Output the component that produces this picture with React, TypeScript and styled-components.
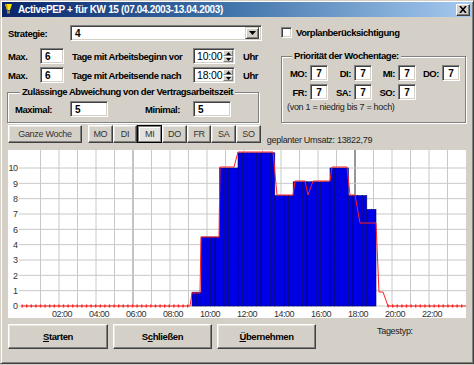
import React from "react";
import styled, { createGlobalStyle } from "styled-components";

const GlobalStyle = createGlobalStyle`
  html, body { margin: 0; padding: 0; background: #d4d0c8; }
  body {
    font-family: "Liberation Sans", Arial, sans-serif;
    font-size: 9px;
    letter-spacing: -0.3px;
    color: #000;
  }
  * { box-sizing: border-box; }
`;

const Window = styled.div`
  width: 474px;
  height: 364px;
  background: #d4d0c8;
  border: 1px solid;
  border-color: #d4d0c8 #404040 #404040 #d4d0c8;
  box-shadow: inset 1px 1px #fff, inset -1px -1px #808080;
  padding: 1px;
  display: flex;
  flex-direction: column;
`;

const TitleBar = styled.div`
  height: 15px;
  display: flex;
  align-items: center;
  padding: 0 2px 0 3px;
  background: linear-gradient(to right, #0a246a 0%, #3a6ea5 45%, #a6caf0 100%);
  color: #fff;
  font-weight: bold;
  font-size: 10px;
  letter-spacing: -0.35px;
`;

const TitleText = styled.span`
  margin-left: 6px;
  flex: 1;
  white-space: nowrap;
`;

const CloseBtn = styled.div`
  width: 14px;
  height: 12px;
  background: #d4d0c8;
  border: 1px solid;
  border-color: #fff #404040 #404040 #fff;
  box-shadow: inset -1px -1px #808080;
  display: flex;
  align-items: center;
  justify-content: center;
`;

const Body = styled.div`
  padding: 8px 6px 0 6px;
  display: flex;
  flex-direction: column;
`;

const TopSection = styled.div`
  display: grid;
  grid-template-columns: 258px 185px;
  column-gap: 15px;
`;

const Column = styled.div`
  display: flex;
  flex-direction: column;
`;

const Row = styled.div<{ $mt?: number; $h?: number }>`
  display: flex;
  align-items: center;
  height: ${(p) => p.$h ?? 16}px;
  margin-top: ${(p) => p.$mt ?? 0}px;
  white-space: nowrap;
`;

const Label = styled.span<{ $w?: number; $ml?: number }>`
  font-weight: bold;
  font-size: 9.5px;
  letter-spacing: -0.45px;
  width: ${(p) => (p.$w ? `${p.$w}px` : "auto")};
  margin-left: ${(p) => p.$ml ?? 0}px;
  flex-shrink: 0;
`;

const Field = styled.div<{ $w: number; $center?: boolean }>`
  width: ${(p) => p.$w}px;
  height: 16px;
  flex-shrink: 0;
  background: #fff;
  border: 1px solid;
  border-color: #808080 #fff #fff #808080;
  box-shadow: inset 1px 1px #404040, inset -1px -1px #d4d0c8;
  padding: ${(p) => (p.$center ? "0" : "0 0 0 4px")};
  display: flex;
  align-items: center;
  justify-content: ${(p) => (p.$center ? "center" : "flex-start")};
  font-weight: bold;
  font-size: 10px;
  letter-spacing: 0;
`;

const Combo = styled(Field)`
  justify-content: space-between;
  padding: 0 2px 0 4px;
`;

const DropBtn = styled.div`
  width: 14px;
  height: 12px;
  background: #d4d0c8;
  border: 1px solid;
  border-color: #d4d0c8 #404040 #404040 #d4d0c8;
  box-shadow: inset 1px 1px #fff, inset -1px -1px #808080;
  display: flex;
  align-items: center;
  justify-content: center;
`;

const TimeField = styled(Field)`
  font-weight: normal;
  font-size: 10.5px;
  letter-spacing: -0.2px;
  padding: 0 1px 0 3px;
  justify-content: space-between;
`;

const Spinner = styled.div`
  display: flex;
  flex-direction: column;
  width: 10px;
  height: 12px;
`;

const SpinHalf = styled.div`
  flex: 1;
  background: #d4d0c8;
  border: 1px solid;
  border-color: #fff #808080 #808080 #fff;
  display: flex;
  align-items: center;
  justify-content: center;
`;

const GroupBox = styled.fieldset<{ $w: number; $ml?: number; $mt: number; $pad: string }>`
  width: ${(p) => p.$w}px;
  margin: ${(p) => p.$mt}px 0 0 ${(p) => p.$ml ?? 0}px;
  padding: ${(p) => p.$pad};
  border: 1px solid #808080;
  box-shadow: inset 1px 1px #fff, 1px 1px #fff;
  min-width: 0;
`;

const Legend = styled.legend`
  font-weight: bold;
  font-size: 9.5px;
  letter-spacing: -0.45px;
  line-height: 12px;
  padding: 0 2px;
  margin-left: 5px;
  background: #d4d0c8;
  white-space: nowrap;
`;

const CheckBox = styled.div`
  width: 11px;
  height: 11px;
  background: #fff;
  border: 1px solid;
  border-color: #808080 #fff #fff #808080;
  box-shadow: inset 1px 1px #404040, inset -1px -1px #d4d0c8;
  margin-right: 4px;
`;

const PrioGrid = styled.div`
  display: grid;
  grid-template-columns: repeat(4, 44px);
  row-gap: 3px;
`;

const PrioCell = styled.div`
  display: flex;
  align-items: center;
  justify-content: flex-end;
  gap: 3px;
  padding-right: 3px;
  height: 16px;
`;

const Note = styled.div`
  margin-top: 1px;
  line-height: 12px;
  white-space: nowrap;
  color: #222;
`;

const DayRow = styled.div`
  display: flex;
  align-items: flex-start;
  height: 18px;
  margin-top: 2px;
`;

const Btn = styled.button<{ $w: number; $pressed?: boolean; $bold?: boolean }>`
  width: ${(p) => p.$w}px;
  height: 100%;
  flex-shrink: 0;
  padding: 0;
  font-family: inherit;
  font-size: ${(p) => (p.$bold ? "9.5px" : "9px")};
  letter-spacing: ${(p) => (p.$bold ? "-0.4px" : "-0.3px")};
  font-weight: ${(p) => (p.$bold ? "bold" : "normal")};
  color: ${(p) => (p.$bold ? "#000" : "#333")};
  background: ${(p) => (p.$pressed ? "#e4e2de" : "#d4d0c8")};
  border: 1px solid;
  border-color: ${(p) => (p.$pressed ? "#000" : "#fff #404040 #404040 #fff")};
  box-shadow: ${(p) =>
    p.$pressed
      ? "inset 1px 1px #808080, inset -1px -1px #808080, inset 2px 2px #fff"
      : "inset -1px -1px #808080, inset 1px 1px #e8e6e2"};
  white-space: nowrap;
`;

const DayGroup = styled.div`
  display: flex;
  height: 100%;
  margin-left: 6px;
`;

const Umsatz = styled.span`
  margin: 9px 0 0 6px;
  line-height: 12px;
  color: #222;
  white-space: nowrap;
`;

const ChartPanel = styled.div`
  margin-top: 7px;
  width: 458px;
  height: 168px;
  background: #fff;
`;

const BottomRow = styled.div`
  display: flex;
  gap: 5px;
  height: 25px;
  margin-top: 6px;
`;

const Tagestyp = styled.span`
  margin: 1px 0 0 56px;
  line-height: 12px;
  color: #222;
`;

/* ---------- chart ---------- */
const OX = 8;
const OY = 150;
const hourX = (h: number) => 14 + 18.5 * h;
const zeroY = 156;
const unit = 13.8;
const vY = (v: number) => zeroY - unit * v;

const yLabels = ["0", "1", "2", "3", "4", "6", "7", "8", "9", "10"];
const slotVals = [
  1, 1, 5, 5, 5, 5, 10, 10, 10, 10, 11.1, 11.1, 11.1, 11.1, 11.1, 11.1, 11.1, 11.1, 8, 8, 8, 8, 9, 9, 9, 9, 9, 9, 9, 9,
  10, 10, 10, 10, 8, 8, 8, 8, 7, 7,
];
const slotStart = 192 - OX;
const slotW = 4.6;

const redAbs: [number, number][] = [
  [22, 306], [190, 306], [192, 293], [200, 293], [201, 237], [219, 237], [220, 167], [234, 167], [238, 152],
  [273, 152], [277, 195], [293, 195], [295, 181], [305, 181], [308, 195], [313, 181], [330, 181], [332, 167],
  [347, 167], [350, 195], [355, 195], [360, 223], [376, 223], [379, 292], [383, 292], [388, 306], [466, 306],
];

const AxisText = styled.text`
  font-family: "Liberation Sans", Arial, sans-serif;
  font-size: 9px;
  letter-spacing: -0.5px;
  fill: #333;
`;

function Chart() {
  const red = redAbs.map(([x, y]) => `${x - OX},${y - OY}`).join(" ");
  const markers: number[] = [];
  for (let x = 22 - OX; x <= 190 - OX; x += 4.6) markers.push(x);
  for (let x = 388 - OX; x <= 466 - OX; x += 4.6) markers.push(x);
  return (
    <svg width={458} height={168} viewBox="0 0 458 168">
      {Array.from({ length: 23 }, (_, i) => i + 1).map((h) => (
        <line
          key={`v${h}`}
          x1={hourX(h)}
          x2={hourX(h)}
          y1={0}
          y2={zeroY}
          stroke={h === 18 ? "#303030" : h === 6 ? "#8a8a8a" : "#c8c8c8"}
          strokeWidth={1}
        />
      ))}
      {yLabels.map((l, k) => {
        const y = zeroY - (k * 138) / 9;
        return (
          <g key={`h${k}`}>
            <line x1={11} x2={458} y1={y} y2={y} stroke="#c8c8c8" strokeWidth={1} />
            <AxisText x={9.5} y={y + 3.3} textAnchor="end">
              {l}
            </AxisText>
          </g>
        );
      })}
      {slotVals.map((v, i) => (
        <rect
          key={`b${i}`}
          x={slotStart + i * slotW}
          y={vY(v)}
          width={slotW}
          height={zeroY - vY(v)}
          fill="#0000e8"
          stroke="#00006a"
          strokeWidth={0.6}
        />
      ))}
      <polyline points={red} fill="none" stroke="#ff2020" strokeWidth={1} />
      {markers.map((x, i) => (
        <rect key={`m${i}`} x={x - 0.6} y={zeroY - 1.5} width={1.4} height={3} fill="#ff2020" />
      ))}
      {[2, 4, 6, 8, 10, 12, 14, 16, 18, 20, 22].map((h) => (
        <AxisText key={`t${h}`} x={hourX(h) + 3} y={166.5} textAnchor="middle">
          {`${h < 10 ? "0" : ""}${h}:00`}
        </AxisText>
      ))}
    </svg>
  );
}

const days = ["MO", "DI", "MI", "DO", "FR", "SA", "SO"];

function ArrowDown() {
  return (
    <svg width="7" height="4" viewBox="0 0 7 4">
      <path d="M0 0h7L3.5 4z" fill="#000" />
    </svg>
  );
}

function Spin() {
  return (
    <Spinner>
      <SpinHalf>
        <svg width="5" height="3" viewBox="0 0 5 3">
          <path d="M0 3h5L2.5 0z" fill="#000" />
        </svg>
      </SpinHalf>
      <SpinHalf>
        <svg width="5" height="3" viewBox="0 0 5 3">
          <path d="M0 0h5L2.5 3z" fill="#000" />
        </svg>
      </SpinHalf>
    </Spinner>
  );
}

export default function App() {
  return (
    <>
      <GlobalStyle />
      <Window>
        <TitleBar>
          <svg width="7" height="11" viewBox="0 0 7 11">
            <path d="M0 0h7L5 6H2z" fill="#ffe600" />
            <path d="M0 0h2l1 6H2z" fill="#c8a000" />
            <rect x="2" y="6.5" width="3" height="3" fill="#9a8a40" />
          </svg>
          <TitleText>ActivePEP + für KW 15 (07.04.2003-13.04.2003)</TitleText>
          <CloseBtn>
            <svg width="8" height="7" viewBox="0 0 8 7">
              <path d="M1 0l6 7M7 0L1 7" stroke="#000" strokeWidth="1.6" fill="none" />
            </svg>
          </CloseBtn>
        </TitleBar>
        <Body>
          <TopSection>
            <Column>
              <Row>
                <Label $w={62}>Strategie:</Label>
                <Combo $w={192}>
                  <span>4</span>
                  <DropBtn>
                    <ArrowDown />
                  </DropBtn>
                </Combo>
              </Row>
              <Row $mt={7}>
                <Label $w={32}>Max.</Label>
                <Field $w={24}>6</Field>
                <Label $w={121} $ml={8}>
                  Tage mit Arbeitsbeginn vor
                </Label>
                <TimeField $w={42}>
                  <span>10:00</span>
                  <Spin />
                </TimeField>
                <Label $ml={8}>Uhr</Label>
              </Row>
              <Row $mt={3}>
                <Label $w={32}>Max.</Label>
                <Field $w={24}>6</Field>
                <Label $w={121} $ml={8}>
                  Tage mit Arbeitsende nach
                </Label>
                <TimeField $w={42}>
                  <span>18:00</span>
                  <Spin />
                </TimeField>
                <Label $ml={8}>Uhr</Label>
              </Row>
              <GroupBox $w={252} $ml={-1} $mt={3} $pad="3px 6px 5px 7px">
                <Legend>Zulässinge Abweichung von der Vertragsarbeitszeit</Legend>
                <Row>
                  <Label $w={55}>Maximal:</Label>
                  <Field $w={38}>5</Field>
                  <Label $w={48} $ml={37}>
                    Minimal:
                  </Label>
                  <Field $w={38}>5</Field>
                </Row>
              </GroupBox>
            </Column>
            <Column>
              <Row $h={13} $mt={1}>
                <CheckBox />
                <Label>Vorplanberücksichtigung</Label>
              </Row>
              <GroupBox $w={185} $mt={11} $pad="3px 4px 9px 5px">
                <Legend>Priorität der Wochentage:</Legend>
                <PrioGrid>
                  {days.map((d) => (
                    <PrioCell key={d}>
                      <Label>{d}:</Label>
                      <Field $w={18} $center>
                        7
                      </Field>
                    </PrioCell>
                  ))}
                </PrioGrid>
                <Note>(von 1 = niedrig bis 7 = hoch)</Note>
              </GroupBox>
            </Column>
          </TopSection>
          <DayRow>
            <Btn $w={74}>Ganze Woche</Btn>
            <DayGroup>
              {days.map((d) => (
                <Btn key={d} $w={24.7} $pressed={d === "MI"}>
                  {d}
                </Btn>
              ))}
            </DayGroup>
            <Umsatz>geplanter Umsatz: 13822,79</Umsatz>
          </DayRow>
          <ChartPanel>
            <Chart />
          </ChartPanel>
          <BottomRow>
            <Btn $w={100} $bold>
              <u>S</u>tarten
            </Btn>
            <Btn $w={99} $bold>
              S<u>c</u>hließen
            </Btn>
            <Btn $w={99} $bold>
              <u>Ü</u>bernehmen
            </Btn>
            <Tagestyp>Tagestyp:</Tagestyp>
          </BottomRow>
        </Body>
      </Window>
    </>
  );
}
